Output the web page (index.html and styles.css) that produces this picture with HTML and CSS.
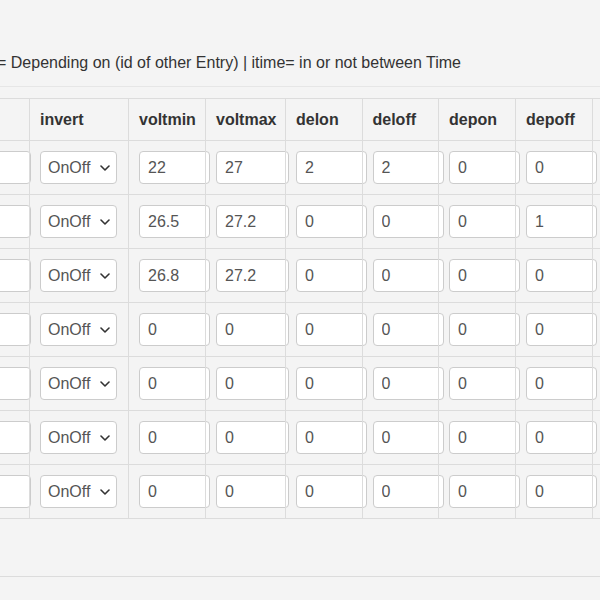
FILE: index.html
```html
<!DOCTYPE html>
<html lang="en">
<head>
  <meta charset="UTF-8">
  <title>Entries</title>
  <link rel="stylesheet" href="styles.css">
</head>
<body>
  <div class="page">
    <p class="legend">= Depending on (id of other Entry) | itime= in or not between Time</p>

    <table class="grid">
      <colgroup>
        <col class="c-name">
        <col class="c-invert">
        <col class="c-vmin">
        <col class="c-vmax">
        <col class="c-del">
        <col class="c-del">
        <col class="c-dep">
        <col class="c-dep">
        <col class="c-dep">
      </colgroup>
      <thead>
        <tr>
          <th></th>
          <th>invert</th>
          <th>voltmin</th>
          <th>voltmax</th>
          <th>delon</th>
          <th>deloff</th>
          <th>depon</th>
          <th>depoff</th>
          <th></th>
        </tr>
      </thead>
      <tbody id="rows"></tbody>
    </table>

    <div class="footer"></div>
  </div>

  <script>
    const rows = [
      ["22", "27", "2", "2", "0", "0"],
      ["26.5", "27.2", "0", "0", "0", "1"],
      ["26.8", "27.2", "0", "0", "0", "0"],
      ["0", "0", "0", "0", "0", "0"],
      ["0", "0", "0", "0", "0", "0"],
      ["0", "0", "0", "0", "0", "0"],
      ["0", "0", "0", "0", "0", "0"]
    ];

    const chevron = '<svg class="chev" width="10" height="6" viewBox="0 0 10 6"><path d="M1 1l4 4 4-4" fill="none" stroke="#333" stroke-width="1.6" stroke-linecap="round" stroke-linejoin="round"/></svg>';

    const body = document.getElementById("rows");
    rows.forEach(function (r) {
      let html = '<td><input type="text" class="field"></td>';
      html += '<td><span class="pick-wrap"><select class="pick"><option>OnOff</option><option>Invert</option></select>' + chevron + '</span></td>';
      r.forEach(function (v, j) {
        html += '<td><input type="text" class="field' + (j === 1 ? ' wide' : '') + '" value="' + v + '"></td>';
      });
      html += '<td><input type="text" class="field"></td>';
      const tr = document.createElement("tr");
      tr.innerHTML = html;
      body.appendChild(tr);
    });
  </script>
</body>
</html>
```

FILE: styles.css
```css
body {
  margin: 0;
  background: #f4f4f4;
  font-family: "Liberation Sans", Arial, sans-serif;
  font-size: 16px;
  color: #333;
}

.page {
  overflow: hidden;
  height: 600px;
}

.legend {
  margin: 0 0 0 -3px;
  padding: 53px 0 13px 0;
  line-height: 20px;
  white-space: nowrap;
  border-bottom: 1px solid #e6e6e6;
}

.grid {
  margin: 11px 0 0 -51px;
  border-collapse: collapse;
  table-layout: fixed;
  width: 1px;
}

.c-name { width: 80px; }
.c-invert { width: 99px; }
.c-vmin { width: 77px; }
.c-vmax { width: 80px; }
.c-del { width: 76.5px; }
.c-dep { width: 77px; }

.grid th,
.grid td {
  border: 1px solid #dcdcdc;
  text-align: left;
  vertical-align: middle;
}

.grid th {
  padding: 10px;
  line-height: 21px;
  font-weight: bold;
}

.grid td {
  padding: 10px;
  overflow: visible;
  white-space: nowrap;
}

.field {
  display: block;
  box-sizing: border-box;
  width: 71px;
  height: 33px;
  padding: 0 8px;
  border: 1px solid #ccc;
  border-radius: 4px;
  background: white;
  font-family: inherit;
  font-size: 16px;
  color: #555;
}

.field.wide {
  width: 73px;
}

.pick-wrap {
  position: relative;
  display: block;
  width: 77px;
}

.pick {
  display: block;
  box-sizing: border-box;
  width: 77px;
  height: 33px;
  padding: 0 7px;
  border: 1px solid #ccc;
  border-radius: 4px;
  background: white;
  font-family: inherit;
  font-size: 16px;
  color: #555;
  appearance: none;
  -webkit-appearance: none;
}

.chev {
  position: absolute;
  left: 60px;
  top: 14px;
  pointer-events: none;
}

.footer {
  margin-top: 57px;
  border-top: 1px solid #dcdcdc;
  height: 30px;
}
```
